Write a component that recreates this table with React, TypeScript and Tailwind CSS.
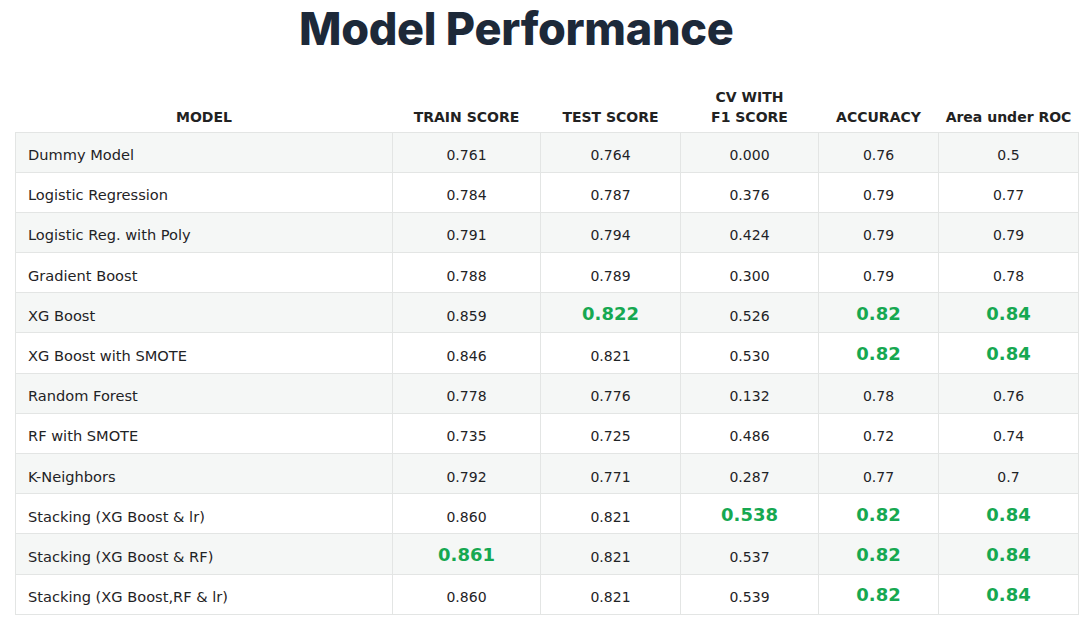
import React from "react";

type Cell = { v: string; g?: boolean };
const rows: { name: string; cells: Cell[] }[] = [
  { name: "Dummy Model", cells: [{ v: "0.761" }, { v: "0.764" }, { v: "0.000" }, { v: "0.76" }, { v: "0.5" }] },
  { name: "Logistic Regression", cells: [{ v: "0.784" }, { v: "0.787" }, { v: "0.376" }, { v: "0.79" }, { v: "0.77" }] },
  { name: "Logistic Reg. with Poly", cells: [{ v: "0.791" }, { v: "0.794" }, { v: "0.424" }, { v: "0.79" }, { v: "0.79" }] },
  { name: "Gradient Boost", cells: [{ v: "0.788" }, { v: "0.789" }, { v: "0.300" }, { v: "0.79" }, { v: "0.78" }] },
  { name: "XG Boost", cells: [{ v: "0.859" }, { v: "0.822", g: true }, { v: "0.526" }, { v: "0.82", g: true }, { v: "0.84", g: true }] },
  { name: "XG Boost with SMOTE", cells: [{ v: "0.846" }, { v: "0.821" }, { v: "0.530" }, { v: "0.82", g: true }, { v: "0.84", g: true }] },
  { name: "Random Forest", cells: [{ v: "0.778" }, { v: "0.776" }, { v: "0.132" }, { v: "0.78" }, { v: "0.76" }] },
  { name: "RF with SMOTE", cells: [{ v: "0.735" }, { v: "0.725" }, { v: "0.486" }, { v: "0.72" }, { v: "0.74" }] },
  { name: "K-Neighbors", cells: [{ v: "0.792" }, { v: "0.771" }, { v: "0.287" }, { v: "0.77" }, { v: "0.7" }] },
  { name: "Stacking (XG Boost & lr)", cells: [{ v: "0.860" }, { v: "0.821" }, { v: "0.538", g: true }, { v: "0.82", g: true }, { v: "0.84", g: true }] },
  { name: "Stacking (XG Boost & RF)", cells: [{ v: "0.861", g: true }, { v: "0.821" }, { v: "0.537" }, { v: "0.82", g: true }, { v: "0.84", g: true }] },
  { name: "Stacking (XG Boost,RF & lr)", cells: [{ v: "0.860" }, { v: "0.821" }, { v: "0.539" }, { v: "0.82", g: true }, { v: "0.84", g: true }] },
];

const widths = ["w-[377px]", "w-[148px]", "w-[140px]", "w-[138px]", "w-[120px]", "w-[140px]"];

export default function App() {
  return (
    <div className="w-[1092px] h-[621px] bg-white overflow-hidden" style={{ fontFamily: '"DejaVu Sans", sans-serif' }}>
      <div className="pl-[299px] pt-[3px] h-[80px]">
        <h1
          className="text-[45px] leading-[52px] font-extrabold text-[#1d2939] tracking-[-0.3px]"
          style={{ fontFamily: 'Inter, "Noto Sans", sans-serif' }}
        >
          Model Performance
        </h1>
      </div>
      <table className="ml-[15px] border-collapse table-fixed text-[#1f2326]">
        <thead>
          <tr className="h-[52px]">
            {["MODEL", "TRAIN SCORE", "TEST SCORE", "CV WITH\nF1 SCORE", "ACCURACY", "Area under ROC"].map((h, i) => (
              <th
                key={i}
                className={`${widths[i]} align-bottom pb-[5px] text-center text-[14px] leading-[20px] font-bold text-[#222] whitespace-pre-line`}
              >
                {h}
              </th>
            ))}
          </tr>
        </thead>
        <tbody>
          {rows.map((r, ri) => (
            <tr key={ri} className={`h-[40.2px] ${ri % 2 === 0 ? "bg-[#f5f7f6]" : "bg-white"}`}>
              <td className="border border-[#e3e5e4] pl-[12px] text-left text-[14.6px] leading-[20px] pt-[6px]">{r.name}</td>
              {r.cells.map((c, ci) => (
                <td
                  key={ci}
                  className={`border border-[#e3e5e4] text-center ${
                    c.g ? "text-[18px] font-bold text-[#16a851] leading-[20px] pt-[2px]" : "text-[14px] leading-[20px] pt-[6px]"
                  }`}
                >
                  {c.v}
                </td>
              ))}
            </tr>
          ))}
        </tbody>
      </table>
    </div>
  );
}
